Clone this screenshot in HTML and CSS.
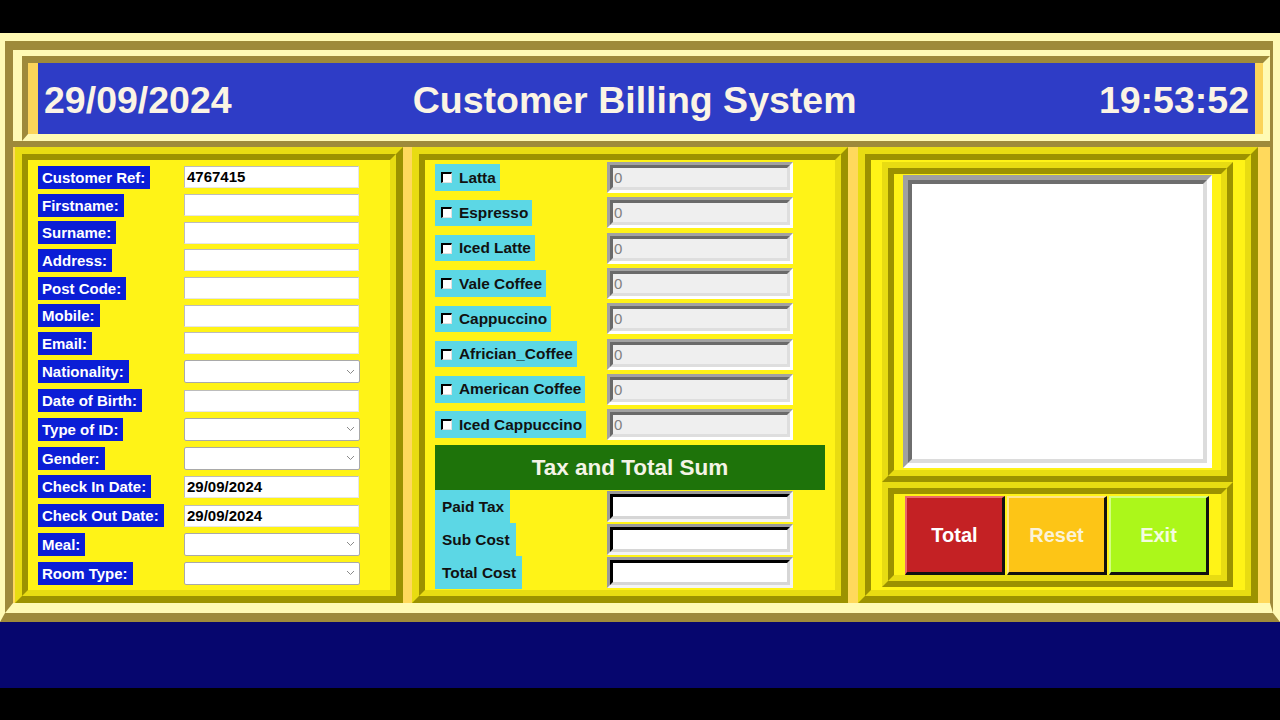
FILE: index.html
```html
<!DOCTYPE html>
<html lang="en">
<head>
<meta charset="utf-8">
<title>Customer Billing System</title>
<link rel="stylesheet" href="styles.css">
</head>
<body>
<div class="topbar"></div>
<div class="main">
  <div class="main-in">
    <div class="title-frame">
      <div class="title-bar">
        <span class="t-date">29/09/2024</span>
        <span class="t-title">Customer Billing System</span>
        <span class="t-time">19:53:52</span>
      </div>
    </div>
    <div class="data">
      <div class="ridge p-left"><div class="ridge-in left-in">
        <div class="frow"><span class="lbl">Customer Ref:</span><div class="ent">4767415</div></div>
        <div class="frow"><span class="lbl">Firstname:</span><div class="ent"></div></div>
        <div class="frow"><span class="lbl">Surname:</span><div class="ent"></div></div>
        <div class="frow"><span class="lbl">Address:</span><div class="ent"></div></div>
        <div class="frow"><span class="lbl">Post Code:</span><div class="ent"></div></div>
        <div class="frow"><span class="lbl">Mobile:</span><div class="ent"></div></div>
        <div class="frow"><span class="lbl">Email:</span><div class="ent"></div></div>
        <div class="frow b"><span class="lbl">Nationality:</span><div class="combo"><svg width="9" height="6" viewBox="0 0 9 6"><path d="M1 1 L4.5 4.5 L8 1" fill="none" stroke="#8a8a8a" stroke-width="1"/></svg></div></div>
        <div class="frow b"><span class="lbl">Date of Birth:</span><div class="ent"></div></div>
        <div class="frow b"><span class="lbl">Type of ID:</span><div class="combo"><svg width="9" height="6" viewBox="0 0 9 6"><path d="M1 1 L4.5 4.5 L8 1" fill="none" stroke="#8a8a8a" stroke-width="1"/></svg></div></div>
        <div class="frow b"><span class="lbl">Gender:</span><div class="combo"><svg width="9" height="6" viewBox="0 0 9 6"><path d="M1 1 L4.5 4.5 L8 1" fill="none" stroke="#8a8a8a" stroke-width="1"/></svg></div></div>
        <div class="frow b"><span class="lbl">Check In Date:</span><div class="ent">29/09/2024</div></div>
        <div class="frow b"><span class="lbl">Check Out Date:</span><div class="ent">29/09/2024</div></div>
        <div class="frow b"><span class="lbl">Meal:</span><div class="combo"><svg width="9" height="6" viewBox="0 0 9 6"><path d="M1 1 L4.5 4.5 L8 1" fill="none" stroke="#8a8a8a" stroke-width="1"/></svg></div></div>
        <div class="frow b"><span class="lbl">Room Type:</span><div class="combo"><svg width="9" height="6" viewBox="0 0 9 6"><path d="M1 1 L4.5 4.5 L8 1" fill="none" stroke="#8a8a8a" stroke-width="1"/></svg></div></div>
      </div></div>

      <div class="ridge p-mid"><div class="ridge-in mid-in">
        <div class="mrow"><span class="cy"><span class="cb"></span>Latta</span><div class="sunk"><div class="sunk-in">0</div></div></div>
        <div class="mrow"><span class="cy"><span class="cb"></span>Espresso</span><div class="sunk"><div class="sunk-in">0</div></div></div>
        <div class="mrow"><span class="cy"><span class="cb"></span>Iced Latte</span><div class="sunk"><div class="sunk-in">0</div></div></div>
        <div class="mrow"><span class="cy"><span class="cb"></span>Vale Coffee</span><div class="sunk"><div class="sunk-in">0</div></div></div>
        <div class="mrow"><span class="cy"><span class="cb"></span>Cappuccino</span><div class="sunk"><div class="sunk-in">0</div></div></div>
        <div class="mrow"><span class="cy"><span class="cb"></span>Africian_Coffee</span><div class="sunk"><div class="sunk-in">0</div></div></div>
        <div class="mrow"><span class="cy"><span class="cb"></span>American Coffee</span><div class="sunk"><div class="sunk-in">0</div></div></div>
        <div class="mrow"><span class="cy"><span class="cb"></span>Iced Cappuccino</span><div class="sunk"><div class="sunk-in">0</div></div></div>
        <div class="green">Tax and Total Sum</div>
        <div class="trow"><span class="tl">Paid Tax</span><div class="sunk w"><div class="sunk-in"></div></div></div>
        <div class="trow"><span class="tl">Sub Cost</span><div class="sunk w"><div class="sunk-in"></div></div></div>
        <div class="trow"><span class="tl">Total Cost</span><div class="sunk w"><div class="sunk-in"></div></div></div>
      </div></div>

      <div class="ridge p-right"><div class="ridge-in right-in">
        <div class="ridge s rsub receipt-frame"><div class="ridge-in receipt-in">
          <div class="receipt"><div class="receipt-inner"></div></div>
        </div></div>
        <div class="ridge s rsub btn-frame"><div class="ridge-in btn-in">
          <div class="btn red">Total</div>
          <div class="btn orange">Reset</div>
          <div class="btn lime">Exit</div>
        </div></div>
      </div></div>
    </div>
  </div>
</div>
<div class="navy"></div>
</body>
</html>
```
FILE: styles.css
```css
* { box-sizing: border-box; }
html, body { margin: 0; padding: 0; }
body {
  background: #000;
  font-family: "Liberation Sans", Arial, sans-serif;
  width: 1280px;
  height: 720px;
  overflow: hidden;
}
.topbar { height: 33px; background: #000; }
.navy { height: 66px; background: #06066e; }

.main {
  height: 589px;
  border-style: solid;
  border-width: 8px 7px 9px 5px;
  border-color: #fffab4 #fffab4 #9e8a3a #fffab4;
}
.main-in {
  height: 100%;
  border-style: solid;
  border-width: 9px 3px 10px 8px;
  border-color: #9e8a3a #9e8a3a #fffab4 #9e8a3a;
  background: #fffab4;
  display: flex;
  flex-direction: column;
}

.title-frame {
  margin: 6px 0 0 9px;
  height: 85px;
  border-style: solid;
  border-width: 7px 7px 7px 6px;
  border-color: #9e8a3a #fffab4 #fffab4 #9e8a3a;
  background: #fbd45a;
  padding: 0 8px 0 10px;
}
.title-bar {
  height: 71px;
  background: #2e3cc6;
  color: #fbf4e4;
  font-weight: bold;
  font-size: 37.5px;
  display: flex;
  align-items: center;
  padding: 4px 6px 0 6px;
  white-space: nowrap;
}
.t-title { margin-left: 181px; }
.t-time { margin-left: auto; }

.data {
  height: 462px;
  border-top: 6px solid #9e8a3a;
  background: #ffd95c;
  display: flex;
  padding-left: 2px;
}

.ridge {
  border-style: solid;
  border-width: 7px;
  border-color: #e8dc12 #9c9200 #9c9200 #e8dc12;
}
.ridge-in {
  height: 100%;
  border-style: solid;
  border-width: 6px;
  border-color: #9c9200 #e8dc12 #e8dc12 #9c9200;
  background: #fff317;
}
.ridge.s { border-width: 6px; }

.p-left { width: 388px; height: 456px; }
.p-mid { width: 436px; height: 456px; margin-left: 9px; }
.p-right { width: 400px; height: 456px; margin-left: 10px; }

/* left panel */
.left-in { padding: 3.5px 0 0 10px; }
.frow {
  display: grid;
  grid-template-columns: 146px 176px;
  align-items: center;
  height: 27.7px;
}
.frow.b { height: 28.8px; }
.lbl {
  justify-self: start;
  background: #0b1ed6;
  color: #fff;
  font-weight: bold;
  font-size: 15px;
  height: 23px;
  line-height: 23px;
  padding: 0 5px 0 4px;
  white-space: nowrap;
}
.ent {
  width: 175px;
  height: 22px;
  border: 1px solid;
  border-color: #bcbcbc #e6e6e6 #e6e6e6 #bcbcbc;
  background: #fff;
  color: #000;
  font-weight: bold;
  font-size: 15px;
  line-height: 20px;
  padding-left: 2px;
}
.combo {
  width: 176px;
  height: 23px;
  border: 1px solid #a9a9a9;
  border-radius: 2px;
  background: #fff;
  display: flex;
  align-items: center;
  justify-content: flex-end;
  padding-right: 4px;
}

/* middle panel */
.mid-in { padding-left: 10px; }
.mrow {
  display: grid;
  grid-template-columns: 172px 186px;
  align-items: center;
  height: 35.3px;
}
.cy {
  justify-self: start;
  display: flex;
  align-items: center;
  height: 26.5px;
  background: #5cd7e5;
  padding: 0 4px 0 6px;
  font-weight: bold;
  font-size: 15.4px;
  color: #111;
  white-space: nowrap;
}
.cb {
  width: 11px;
  height: 11px;
  border-style: solid;
  border-width: 2px 1px 1px 2px;
  border-color: #000 #e0e0e0 #e0e0e0 #000;
  background: #fff;
  margin-right: 7px;
}
.sunk {
  width: 186px;
  height: 31px;
  border-style: solid;
  border-width: 3px;
  border-color: #a2a2a2 #fff #fff #a2a2a2;
}
.sunk-in {
  height: 100%;
  border-style: solid;
  border-width: 3px;
  border-color: #6a6a6a #dedede #dedede #6a6a6a;
  background: #efefef;
  color: #808080;
  font-size: 15px;
  line-height: 19px;
  padding-left: 1px;
}
.sunk.w { border-color: #9a9a9a #f4f4f4 #f4f4f4 #9a9a9a; }
.sunk.w .sunk-in {
  background: #fff;
  border-color: #000 #d6d6d6 #d6d6d6 #000;
}
.green {
  margin-top: 3px;
  width: 390px;
  height: 45px;
  background: #1e730a;
  color: #f4f4e6;
  font-weight: bold;
  font-size: 22.5px;
  display: flex;
  align-items: center;
  justify-content: center;
}
.trow {
  display: grid;
  grid-template-columns: 172px 186px;
  align-items: center;
  height: 33px;
}
.tl {
  justify-self: start;
  align-self: stretch;
  display: flex;
  align-items: center;
  background: #5cd7e5;
  padding: 0 6px 0 7px;
  font-weight: bold;
  font-size: 15.4px;
  color: #111;
  white-space: nowrap;
}

/* right panel */
.right-in { padding: 2px 0 0 11px; }
.rsub { width: 351px; }
.receipt-frame { height: 320px; }
.receipt-in { padding: 1px 0 0 9px; }
.receipt {
  width: 309px;
  height: 293px;
  border-style: solid;
  border-width: 5px;
  border-color: #a0a0a0 #fff #fff #a0a0a0;
  background: #fff;
}
.receipt-inner {
  height: 100%;
  border-style: solid;
  border-width: 4px;
  border-color: #6e6e6e #dcdcdc #dcdcdc #6e6e6e;
  background: #fff;
}
.btn-frame { height: 105px; }
.btn-in {
  padding: 2px 0 0 11px;
  display: flex;
  gap: 2px;
}
.btn {
  width: 100px;
  height: 79px;
  border-style: solid;
  border-width: 2px 3px 3px 2px;
  display: flex;
  align-items: center;
  justify-content: center;
  font-weight: bold;
  font-size: 20px;
  color: #fff;
}
.red { background: #c42124; border-color: #ea6a6a #111 #111 #ea6a6a; }
.orange { background: #fdc516; border-color: #ffe48a #111 #111 #ffe48a; color: #fbf3d8; }
.lime { background: #acf71a; border-color: #d4ff80 #111 #111 #d4ff80; color: #f4fbe0; }
```
